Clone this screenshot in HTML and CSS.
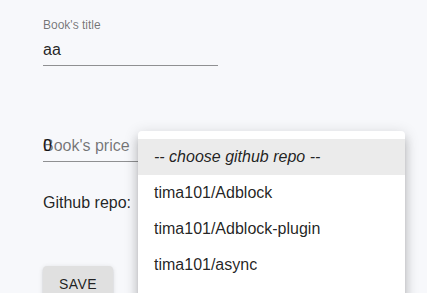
FILE: index.html
```html
<!DOCTYPE html>
<html>
<head>
<meta charset="utf-8">
<link rel="stylesheet" href="styles.css">
</head>
<body>
<div class="page">
  <div class="field">
    <label class="label shrink">Book's title</label>
    <div class="input-wrap"><span class="input">aa</span></div>
  </div>
  <div class="field price">
    <label class="label">Book's price</label>
    <div class="input-wrap"><span class="input">0</span></div>
  </div>
  <div class="repo">
    <span class="repo-label">Github repo:</span>
    <span class="select"></span>
  </div>
  <div class="actions">
    <button class="save">Save</button>
  </div>
</div>
<ul class="menu">
  <li class="item selected"><em>-- choose github repo --</em></li>
  <li class="item">tima101/Adblock</li>
  <li class="item">tima101/Adblock-plugin</li>
  <li class="item">tima101/async</li>
  <li class="item"></li>
</ul>
</body>
</html>
```

FILE: styles.css
```css
html, body {
  margin: 0;
  padding: 0;
  height: 100%;
  overflow: hidden;
}
body {
  background: #f7f8fb;
  font-family: "Liberation Sans", Arial, sans-serif;
  color: rgba(0, 0, 0, 0.87);
  position: relative;
}
.page {
  padding: 18px 0 0 43px;
  display: flex;
  flex-direction: column;
  align-items: flex-start;
}
.field {
  position: relative;
  width: 175px;
  height: 48px;
}
.field.price {
  margin-top: 48px;
}
.label {
  position: absolute;
  left: 0;
  top: 0;
  font-size: 16px;
  line-height: 1;
  color: rgba(0, 0, 0, 0.54);
  transform: translate(0, 24px) scale(1);
  transform-origin: top left;
  white-space: nowrap;
}
.label.shrink {
  transform: translate(0, 1.5px) scale(0.75);
}
.input-wrap {
  margin-top: 16px;
  height: 32px;
  box-sizing: border-box;
  border-bottom: 1px solid rgba(0, 0, 0, 0.42);
}
.input {
  display: block;
  padding: 6px 0 7px;
  height: 19px;
  line-height: 19px;
  font-size: 16px;
}
.repo {
  margin-top: 31px;
  display: flex;
  align-items: center;
  gap: 8px;
  font-size: 16px;
  line-height: 19px;
  color: rgba(0, 0, 0, 0.87);
}
.select {
  display: inline-block;
  width: 200px;
  height: 19px;
}
.actions {
  margin-top: 54px;
}
.save {
  font-family: "Liberation Sans", Arial, sans-serif;
  font-size: 14px;
  font-weight: 400;
  line-height: 24px;
  letter-spacing: 0.02857em;
  text-transform: uppercase;
  color: rgba(0, 0, 0, 0.87);
  background: #e0e0e0;
  border: 0;
  border-radius: 4px;
  padding: 6px 16px;
  min-width: 64px;
  width: 70px;
  box-shadow: 0 3px 1px -2px rgba(0,0,0,0.2), 0 2px 2px 0 rgba(0,0,0,0.14), 0 1px 5px 0 rgba(0,0,0,0.12);
}
.menu {
  position: absolute;
  left: 138px;
  top: 131px;
  width: 267px;
  margin: 0;
  padding: 8px 0;
  list-style: none;
  background: #fff;
  border-radius: 4px;
  box-shadow: 0 5px 5px -3px rgba(0,0,0,0.2), 0 8px 10px 1px rgba(0,0,0,0.14), 0 3px 14px 2px rgba(0,0,0,0.12);
}
.item {
  box-sizing: border-box;
  height: 36px;
  padding: 6px 16px;
  font-size: 16px;
  line-height: 24px;
  color: rgba(0, 0, 0, 0.87);
  white-space: nowrap;
}
.item.selected {
  background: rgba(0, 0, 0, 0.08);
}
```
